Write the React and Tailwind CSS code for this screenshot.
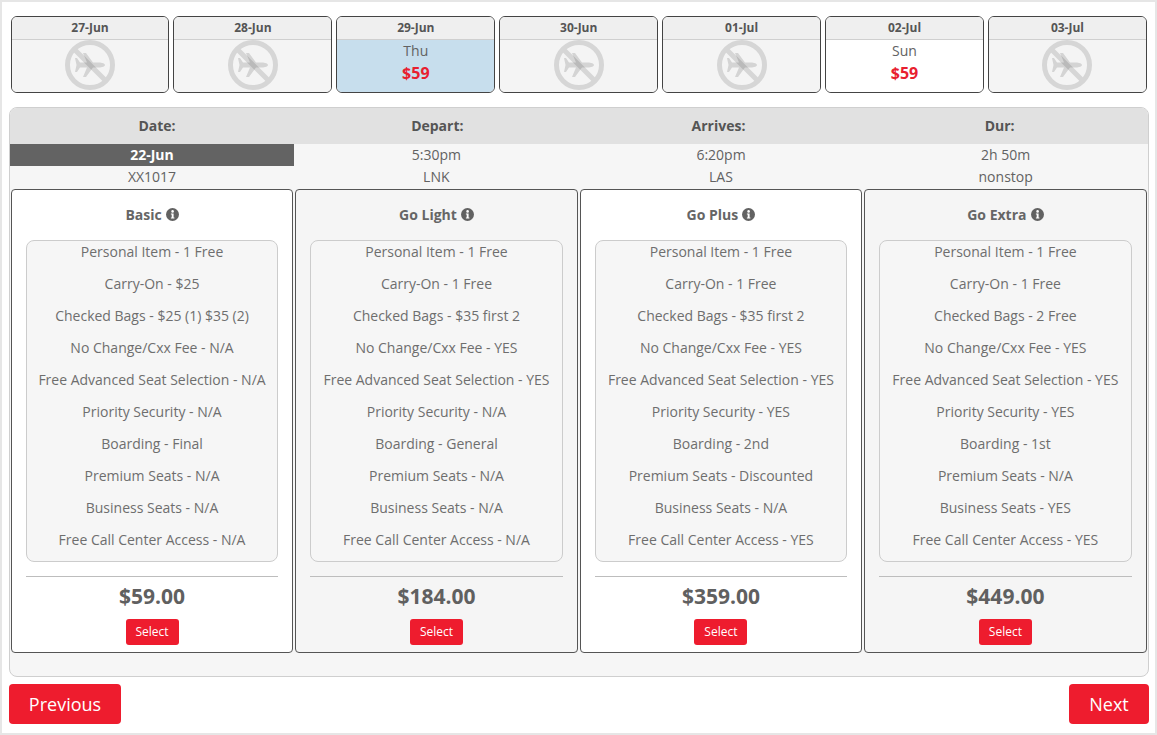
const days = [
  { date: '27-Jun' },
  { date: '28-Jun' },
  { date: '29-Jun', day: 'Thu', price: '$59', selected: true },
  { date: '30-Jun' },
  { date: '01-Jul' },
  { date: '02-Jul', day: 'Sun', price: '$59' },
  { date: '03-Jul' },
];

const fares = [
  {
    name: 'Basic',
    price: '$59.00',
    white: true,
    items: ['Personal Item - 1 Free', 'Carry-On - $25', 'Checked Bags - $25 (1) $35 (2)', 'No Change/Cxx Fee - N/A', 'Free Advanced Seat Selection - N/A', 'Priority Security - N/A', 'Boarding - Final', 'Premium Seats - N/A', 'Business Seats - N/A', 'Free Call Center Access - N/A'],
  },
  {
    name: 'Go Light',
    price: '$184.00',
    items: ['Personal Item - 1 Free', 'Carry-On - 1 Free', 'Checked Bags - $35 first 2', 'No Change/Cxx Fee - YES', 'Free Advanced Seat Selection - YES', 'Priority Security - N/A', 'Boarding - General', 'Premium Seats - N/A', 'Business Seats - N/A', 'Free Call Center Access - N/A'],
  },
  {
    name: 'Go Plus',
    price: '$359.00',
    white: true,
    items: ['Personal Item - 1 Free', 'Carry-On - 1 Free', 'Checked Bags - $35 first 2', 'No Change/Cxx Fee - YES', 'Free Advanced Seat Selection - YES', 'Priority Security - YES', 'Boarding - 2nd', 'Premium Seats - Discounted', 'Business Seats - N/A', 'Free Call Center Access - YES'],
  },
  {
    name: 'Go Extra',
    price: '$449.00',
    items: ['Personal Item - 1 Free', 'Carry-On - 1 Free', 'Checked Bags - 2 Free', 'No Change/Cxx Fee - YES', 'Free Advanced Seat Selection - YES', 'Priority Security - YES', 'Boarding - 1st', 'Premium Seats - N/A', 'Business Seats - YES', 'Free Call Center Access - YES'],
  },
];

export default function App() {
  return (
    <div className="h-[735px] w-[1157px] overflow-hidden border-2 border-[#e6e6e6] bg-white font-['Open_Sans',sans-serif] text-[14px] text-[#626262]">
      <div className="flex gap-[4px] pl-[8.55px] pr-[8.15px] pt-[14px]">
        {days.map((d) => (
          <DayCard key={d.date} {...d} />
        ))}
      </div>

      <div className="ml-[7px] mr-[6px] mt-[14px] h-[570px] overflow-hidden rounded-[8px] border border-[#cfcfcf] bg-[#f6f6f6]">
        <div className="grid h-[36px] grid-cols-[284px_1fr_1fr_1fr] items-center bg-[#e1e1e1] pb-[2px] text-center font-bold text-[#555]">
          <div className="pl-[10px]">Date:</div>
          <div className="pl-[2px]">Depart:</div>
          <div className="pr-[5px]">Arrives:</div>
          <div className="pr-[12px]">Dur:</div>
        </div>
        <div className="grid h-[22px] grid-cols-[284px_1fr_1fr_1fr] items-center text-center leading-[22px]">
          <div className="bg-[#636363] font-bold text-white">22-Jun</div>
          <div>5:30pm</div>
          <div>6:20pm</div>
          <div>2h 50m</div>
        </div>
        <div className="mb-[1px] grid h-[22px] grid-cols-[284px_1fr_1fr_1fr] items-center text-center leading-[22px]">
          <div>XX1017</div>
          <div>LNK</div>
          <div>LAS</div>
          <div>nonstop</div>
        </div>
        <div className="flex gap-[2px] pl-[0.8px] pr-[1.4px]">
          {fares.map((f) => (
            <FareCard key={f.name} {...f} />
          ))}
        </div>
      </div>

      <div className="ml-[7px] mr-[6px] mt-[7px] flex justify-between">
        <button className="h-[40px] w-[112px] rounded-[4px] bg-[#ee1c2e] text-[18px] text-white">Previous</button>
        <button className="h-[40px] w-[80px] rounded-[4px] bg-[#ee1c2e] text-[18px] text-white">Next</button>
      </div>
    </div>
  );
}

function DayCard({ date, day, price, selected }) {
  const bg = selected ? 'bg-[#c7deed]' : price ? 'bg-white' : 'bg-[#f4f4f4]';
  return (
    <div className="h-[77px] flex-1 overflow-hidden rounded-[6px] border border-[#444]">
      <div className="h-[23px] border-b border-[#cfcfcf] bg-[#efefef] text-center text-[12px] font-bold leading-[22px] text-[#555]">{date}</div>
      <div className={`h-[52px] text-center ${bg}`}>
        {price ? (
          <>
            <div className="h-[22px] leading-[22px]">{day}</div>
            <div className="text-[16px] font-bold leading-[22px] text-[#e8202f]">{price}</div>
          </>
        ) : (
          <div className="flex justify-center">
            <NoFlight />
          </div>
        )}
      </div>
    </div>
  );
}

function FareCard({ name, price, items, white }) {
  return (
    <div className={`h-[464px] flex-1 rounded-[4px] border border-[#555] px-[14px] ${white ? 'bg-white' : 'bg-[#f5f5f5]'}`}>
      <div className="flex h-[50px] items-center justify-center gap-[4px] pb-[2px] font-bold text-[#666]">
        <span>{name}</span>
        <InfoIcon />
      </div>
      <div className="h-[322px] rounded-[8px] border border-[#cccccc] bg-[#f6f6f6] text-center text-[#6e6e6e]">
        {items.map((item) => (
          <div key={item} className="h-[32px] leading-[22px]">{item}</div>
        ))}
      </div>
      <div className="mt-[14px] border-t border-[#bdbdbd] pt-[4px] text-center">
        <div className="text-[21px] font-bold leading-[30px] text-[#606060]">{price}</div>
        <button className="mt-[8px] h-[26px] w-[53px] rounded-[3px] bg-[#ee1c2e] text-[12px] text-white">Select</button>
      </div>
    </div>
  );
}

function InfoIcon() {
  return (
    <svg width="13" height="13" viewBox="0 0 13 13">
      <circle cx="6.5" cy="6.5" r="6.5" fill="#626262" />
      <circle cx="6.6" cy="3.4" r="1.3" fill="#fff" />
      <path d="M4.9 5.4h2.7v4.1h.8v1.1H4.9V9.5h.8V6.5h-.8z" fill="#fff" />
    </svg>
  );
}

function NoFlight() {
  return (
    <svg width="50" height="50" viewBox="0 0 50 50">
      <path
        d="M40 25c0-1.5-3-2.5-6-2.5h-6L21 13h-3l4 9.5h-7L12 18h-2l1.5 7-1.5 7h2l3-4.5h7l-4 9.5h3l7-9.5h6c3 0 6-1 6-2.5z"
        fill="#000"
        opacity="0.13"
      />
      <g opacity="0.12">
        <circle cx="25" cy="25" r="22.5" fill="none" stroke="#000" strokeWidth="5" />
        <path d="M9 9l32 32" stroke="#000" strokeWidth="5" />
      </g>
    </svg>
  );
}
